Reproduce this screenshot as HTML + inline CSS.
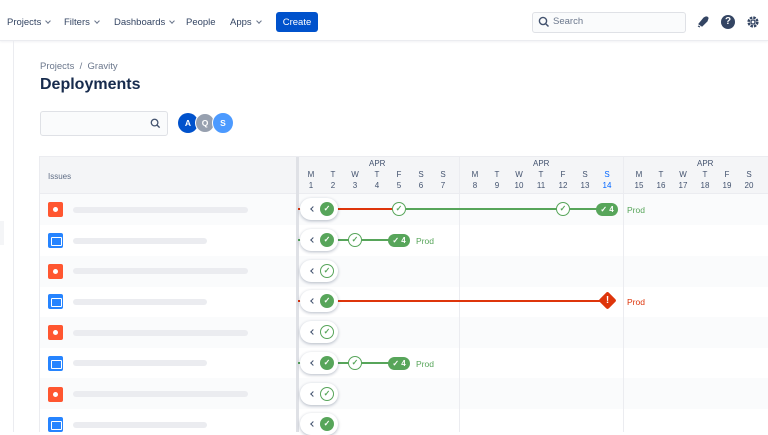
<!DOCTYPE html>
<html><head><meta charset="utf-8"><style>
*{box-sizing:border-box;margin:0;padding:0}
body{width:768px;height:432px;overflow:hidden;background:#fff;font-family:"Liberation Sans",sans-serif;color:#42526e;position:relative}
.a{position:absolute}
.nav{font-size:9.5px;color:#344563;top:17px}
.chev{display:inline-block;width:4px;height:4px;border-right:1px solid #6b778c;border-bottom:1px solid #6b778c;transform:rotate(45deg);margin-left:5px;position:relative;top:-2px}
.day{font-size:8px;color:#42526e;text-align:center;width:16px;line-height:11px}
.row{left:40px;width:728px;height:31px}
.bar{left:73px;height:6px;border-radius:3px;background:#ebecf0}
.ico{left:48px;width:15px;height:15px;border-radius:2px}
.red{background:#ff5630}.red::after{content:"";position:absolute;left:5px;top:5px;width:5px;height:5px;border-radius:50%;background:#fff}
.blue{background:#2684ff}.blue::after{content:"";position:absolute;left:3px;top:4px;width:9px;height:7px;border:1.3px solid #fff;border-radius:1px}
.pill{left:300px;width:38px;height:22px;border-radius:11px;background:#fff;box-shadow:0 1px 3px rgba(9,30,66,.3)}
.pill i{position:absolute;left:11px;top:9px;width:4px;height:4px;border-left:1.5px solid #42526e;border-bottom:1.5px solid #42526e;transform:rotate(45deg)}
.cf{width:14px;height:14px;border-radius:50%;background:#57a55a;color:#fff;font-size:8px;text-align:center;line-height:14px;font-weight:bold}
.ch{width:14px;height:14px;border-radius:50%;border:1.5px solid #57a55a;background:#fff;color:#57a55a;font-size:8px;text-align:center;line-height:11px;font-weight:bold}
.ln{height:1.5px}
.g{background:#57a55a}.r{background:#de350b}
.gp{height:13px;width:22px;border-radius:7px;background:#57a55a;color:#fff;font-size:8px;font-weight:bold;text-align:center;line-height:13px}
.prod{font-size:8.5px}
</style></head><body>
<div class="a" style="left:0;top:0;width:768px;height:41px;border-bottom:1px solid #ebecf0;box-shadow:0 1px 2px rgba(9,30,66,.06)"></div>
<div class="a nav" style="left:7px">Projects<span class="chev"></span></div>
<div class="a nav" style="left:64px">Filters<span class="chev"></span></div>
<div class="a nav" style="left:114px">Dashboards<span class="chev"></span></div>
<div class="a nav" style="left:186px">People</div>
<div class="a nav" style="left:230px">Apps<span class="chev"></span></div>
<div class="a" style="left:276px;top:12px;width:42px;height:20px;background:#0052cc;border-radius:3px;color:#fff;font-size:9.5px;text-align:center;line-height:21px">Create</div>
<div class="a" style="left:532px;top:12px;width:154px;height:21px;border:1.5px solid #dfe1e6;border-radius:3px;background:#fafbfc;font-size:9.5px;color:#6b778c;line-height:18px;padding-left:20px">Search</div>
<svg class="a" style="left:538px;top:16px" width="12" height="12" viewBox="0 0 12 12"><circle cx="5" cy="5" r="3.6" fill="none" stroke="#42526e" stroke-width="1.4"/><path d="M7.6 7.6L10.5 10.5" stroke="#42526e" stroke-width="1.5"/></svg>
<svg class="a" style="left:696px;top:15px" width="14" height="14" viewBox="0 0 14 14"><path d="M3 9 L8 3 Q11 1 12 3 L11 6 L6 11 Z M2 11 L4 12" fill="#344563" stroke="#344563" stroke-width="1.2"/></svg>
<div class="a" style="left:721px;top:15px;width:14px;height:14px;border-radius:50%;background:#344563;color:#fff;font-size:10px;font-weight:bold;text-align:center;line-height:14px">?</div>
<svg class="a" style="left:746px;top:15px" width="14" height="14" viewBox="0 0 14 14"><circle cx="7" cy="7" r="4.3" fill="none" stroke="#344563" stroke-width="2.6" stroke-dasharray="2.4 1"/><circle cx="7" cy="7" r="2" fill="none" stroke="#344563" stroke-width="1.3"/></svg>
<div class="a" style="left:13px;top:41px;width:1px;height:391px;background:#ebecf0"></div>
<div class="a" style="left:0;top:221px;width:4px;height:24px;background:#f4f5f7"></div>
<div class="a" style="left:40px;top:61px;font-size:9.5px;color:#6b778c">Projects &nbsp;/&nbsp; Gravity</div>
<div class="a" style="left:40px;top:76px;font-size:16px;font-weight:bold;color:#172b4d">Deployments</div>
<div class="a" style="left:40px;top:111px;width:128px;height:25px;border:1.5px solid #dfe1e6;border-radius:3px;background:#fafbfc"></div>
<svg class="a" style="left:150px;top:118px" width="11" height="11" viewBox="0 0 12 12"><circle cx="5" cy="5" r="3.6" fill="none" stroke="#42526e" stroke-width="1.4"/><path d="M7.6 7.6L10.5 10.5" stroke="#42526e" stroke-width="1.5"/></svg>
<div class="a" style="left:178px;top:113px;width:20px;height:20px;border-radius:50%;background:#0052cc;color:#fff;font-size:8.5px;text-align:center;line-height:20px;font-weight:bold">A</div>
<div class="a" style="left:195px;top:113px;width:20px;height:20px;border-radius:50%;background:#97a0af;color:#fff;font-size:8.5px;text-align:center;line-height:18px;font-weight:bold;border:1px solid #fff">Q</div>
<div class="a" style="left:212px;top:112px;width:22px;height:22px;border-radius:50%;background:#4c9aff;color:#fff;font-size:8.5px;text-align:center;line-height:20px;font-weight:bold;border:1px solid #fff">S</div>
<!-- table -->
<div class="a" style="left:39px;top:156px;width:729px;height:276px;border:1px solid #ebecf0;border-right:none;border-bottom:none"></div>
<div class="a" style="left:40px;top:157px;width:728px;height:37px;background:#f4f5f7;border-bottom:1px solid #ebecf0"></div>
<div class="a" style="left:48px;top:172px;font-size:8px;color:#5e6c84">Issues</div>
<div class="a row" style="top:194px;background:#fafbfc"></div>
<div class="a row" style="top:256px;background:#fafbfc"></div>
<div class="a row" style="top:317px;background:#fafbfc"></div>
<div class="a row" style="top:378px;background:#fafbfc"></div>
<div class="a" style="left:459px;top:157px;width:1px;height:275px;background:#ebecf0"></div>
<div class="a" style="left:623px;top:157px;width:1px;height:275px;background:#ebecf0"></div>
<div class="a" style="left:296px;top:157px;width:3px;height:275px;background:#dfe1e6"></div>
<!-- header days -->
<div class="a" style="left:369px;top:159px;font-size:8px">APR</div>
<div class="a" style="left:533px;top:159px;font-size:8px">APR</div>
<div class="a" style="left:697px;top:159px;font-size:8px">APR</div>
<div class="a day" style="left:303px;top:169px">M<br>1</div><div class="a day" style="left:325px;top:169px">T<br>2</div><div class="a day" style="left:347px;top:169px">W<br>3</div><div class="a day" style="left:369px;top:169px">T<br>4</div><div class="a day" style="left:391px;top:169px">F<br>5</div><div class="a day" style="left:413px;top:169px">S<br>6</div><div class="a day" style="left:435px;top:169px">S<br>7</div>
<div class="a day" style="left:467px;top:169px">M<br>8</div><div class="a day" style="left:489px;top:169px">T<br>9</div><div class="a day" style="left:511px;top:169px">W<br>10</div><div class="a day" style="left:533px;top:169px">T<br>11</div><div class="a day" style="left:555px;top:169px">F<br>12</div><div class="a day" style="left:577px;top:169px">S<br>13</div><div class="a day" style="left:599px;top:169px;color:#0065ff">S<br>14</div>
<div class="a day" style="left:631px;top:169px">M<br>15</div><div class="a day" style="left:653px;top:169px">T<br>16</div><div class="a day" style="left:675px;top:169px">W<br>17</div><div class="a day" style="left:697px;top:169px">T<br>18</div><div class="a day" style="left:719px;top:169px">F<br>19</div><div class="a day" style="left:741px;top:169px">S<br>20</div>
<!-- issue rows -->
<div class="a ico red" style="top:202px"></div><div class="a bar" style="top:207px;width:175px"></div>
<div class="a ico blue" style="top:233px"></div><div class="a bar" style="top:238px;width:134px"></div>
<div class="a ico red" style="top:264px"></div><div class="a bar" style="top:268px;width:175px"></div>
<div class="a ico blue" style="top:294px"></div><div class="a bar" style="top:299px;width:134px"></div>
<div class="a ico red" style="top:325px"></div><div class="a bar" style="top:330px;width:175px"></div>
<div class="a ico blue" style="top:356px"></div><div class="a bar" style="top:360px;width:134px"></div>
<div class="a ico red" style="top:387px"></div><div class="a bar" style="top:391px;width:175px"></div>
<div class="a ico blue" style="top:417px"></div><div class="a bar" style="top:422px;width:134px"></div>
<!-- timeline lines -->
<div class="a ln r" style="left:298px;top:208px;width:4px"></div>
<div class="a ln r" style="left:337px;top:208px;width:56px"></div>
<div class="a ln g" style="left:406px;top:208px;width:151px"></div>
<div class="a ln g" style="left:570px;top:208px;width:28px"></div>
<div class="a ln g" style="left:298px;top:239px;width:4px"></div>
<div class="a ln g" style="left:334px;top:239px;width:16px"></div>
<div class="a ln g" style="left:361px;top:239px;width:28px"></div>
<div class="a ln r" style="left:298px;top:300px;width:4px"></div>
<div class="a ln r" style="left:337px;top:300px;width:266px"></div>
<div class="a ln g" style="left:298px;top:362px;width:4px"></div>
<div class="a ln g" style="left:334px;top:362px;width:16px"></div>
<div class="a ln g" style="left:361px;top:362px;width:28px"></div>
<!-- pills -->
<div class="a pill" style="top:198px"><i></i><div class="a cf" style="left:20px;top:4px">✓</div></div>
<div class="a pill" style="top:229px"><i></i><div class="a cf" style="left:20px;top:4px">✓</div></div>
<div class="a pill" style="top:260px"><i></i><div class="a ch" style="left:20px;top:4px">✓</div></div>
<div class="a pill" style="top:290px"><i></i><div class="a cf" style="left:20px;top:4px">✓</div></div>
<div class="a pill" style="top:321px"><i></i><div class="a ch" style="left:20px;top:4px">✓</div></div>
<div class="a pill" style="top:352px"><i></i><div class="a cf" style="left:20px;top:4px">✓</div></div>
<div class="a pill" style="top:383px"><i></i><div class="a ch" style="left:20px;top:4px">✓</div></div>
<div class="a pill" style="top:413px"><i></i><div class="a cf" style="left:20px;top:4px">✓</div></div>
<!-- markers -->
<div class="a ch" style="left:392px;top:202px">✓</div>
<div class="a ch" style="left:556px;top:202px">✓</div>
<div class="a gp" style="left:596px;top:203px">✓ 4</div>
<div class="a prod" style="left:627px;top:205px;color:#57a55a">Prod</div>
<div class="a ch" style="left:348px;top:233px">✓</div>
<div class="a gp" style="left:388px;top:234px">✓ 4</div>
<div class="a prod" style="left:416px;top:236px;color:#57a55a">Prod</div>
<div class="a" style="left:601px;top:294px;width:13px;height:13px;background:#de350b;transform:rotate(45deg);border-radius:2px"></div>
<div class="a" style="left:601px;top:294px;width:13px;height:13px;color:#fff;font-size:10px;font-weight:bold;text-align:center;line-height:13px">!</div>
<div class="a prod" style="left:627px;top:297px;color:#de350b">Prod</div>
<div class="a ch" style="left:348px;top:356px">✓</div>
<div class="a gp" style="left:388px;top:357px">✓ 4</div>
<div class="a prod" style="left:416px;top:359px;color:#57a55a">Prod</div>
</body></html>
